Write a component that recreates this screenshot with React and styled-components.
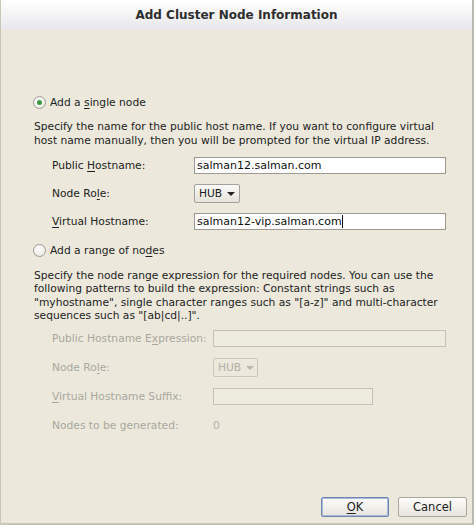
import React from "react";
import styled, { createGlobalStyle } from "styled-components";

const GlobalStyle = createGlobalStyle`
  html, body {
    margin: 0;
    padding: 0;
    background: #ece9dc;
  }
  * {
    box-sizing: border-box;
  }
`;

const Dialog = styled.div`
  width: 474px;
  height: 525px;
  display: flex;
  flex-direction: column;
  font-family: "DejaVu Sans", Verdana, sans-serif;
  font-size: 10.7px;
  color: #1e1e1e;
  background: #ece9dc;
  border-left: 1px solid #c9c6b8;
  border-right: 2px solid #b9b7ae;
  border-bottom: 2px solid #c9c6b8;
`;

const TitleBar = styled.div`
  height: 30px;
  flex-shrink: 0;
  display: flex;
  align-items: center;
  justify-content: center;
  padding-bottom: 1px;
  background: linear-gradient(#ffffff, #f6f6f7 40%, #e7e7ec);
  font-weight: bold;
  font-size: 12px;
  color: #2e2e2e;
`;

const Body = styled.div`
  flex: 1;
  display: flex;
  flex-direction: column;
  padding: 65px 8px 0 32px;
`;

const RadioRow = styled.label`
  display: flex;
  align-items: center;
  gap: 4px;
  height: 14px;
  margin-top: ${(p) => p.$top || 0}px;
`;

const RadioDot = styled.span`
  width: 13px;
  height: 13px;
  border-radius: 50%;
  border: 1px solid #9d9c95;
  background: radial-gradient(circle at 40% 35%, #ffffff, #e6e4dc);
  display: flex;
  align-items: center;
  justify-content: center;

  &::after {
    content: "";
    width: 5px;
    height: 5px;
    border-radius: 50%;
    background: ${(p) => (p.$checked ? "#3c9a3c" : "transparent")};
  }
`;

const Key = styled.span`
  text-decoration: underline;
  text-underline-offset: 2px;
`;

const Note = styled.p`
  margin: ${(p) => p.$top || 0}px 0 0 1px;
  line-height: ${(p) => p.$lh || 14}px;
  white-space: nowrap;
  color: #222;
`;

const Form = styled.div`
  display: grid;
  grid-template-columns: ${(p) => p.$label}px 1fr;
  row-gap: ${(p) => p.$gap}px;
  align-items: center;
  margin: ${(p) => p.$top}px 18px 0 19px;
`;

const Label = styled.span`
  color: ${(p) => (p.$disabled ? "#a9a79e" : "#222")};
`;

const TextField = styled.div`
  height: 17px;
  width: ${(p) => (p.$w ? `${p.$w}px` : "100%")};
  border: 1px solid ${(p) => (p.$disabled ? "#c3c1b8" : "#9c9a93")};
  background: ${(p) => (p.$disabled ? "#eeebdf" : "#fff")};
  padding: 0 2px;
  display: flex;
  align-items: center;
  font-size: 11px;
  color: #111;
`;

const Caret = styled.span`
  width: 1px;
  height: 13px;
  background: #111;
`;

const Combo = styled.div`
  width: ${(p) => p.$w}px;
  height: 19px;
  border: 1px solid ${(p) => (p.$disabled ? "#c9c7be" : "#a3a199")};
  border-radius: 2px;
  background: ${(p) =>
    p.$disabled ? "#ece9dc" : "linear-gradient(#fbfbf9, #e4e2d9)"};
  display: flex;
  align-items: center;
  gap: 5px;
  padding: 0 4px;
  color: ${(p) => (p.$disabled ? "#b0aea5" : "#1a1a1a")};
`;

const Arrow = styled.span`
  width: 0;
  height: 0;
  border-left: 4px solid transparent;
  border-right: 4px solid transparent;
  border-top: 4px solid ${(p) => (p.$disabled ? "#b9b7ae" : "#222")};
`;

const Value = styled.span`
  height: 19px;
  display: flex;
  align-items: center;
  color: #b3b1a8;
`;

const Footer = styled.div`
  display: flex;
  justify-content: flex-end;
  gap: 9px;
  padding: 0 5px 6px 0;
`;

const Button = styled.button`
  width: ${(p) => p.$w}px;
  height: 20px;
  font-family: inherit;
  font-size: 11.5px;
  color: #222;
  border-radius: 2px;
  border: 1px solid ${(p) => (p.$default ? "#6f86b0" : "#a8a69e")};
  box-shadow: ${(p) => (p.$default ? "inset 0 0 0 1px #a9bad8" : "none")};
  background: linear-gradient(#fdfdfc, #e6e4dc);
  padding: 0;
`;

export default function App() {
  return (
    <>
      <GlobalStyle />
      <Dialog>
        <TitleBar>Add Cluster Node Information</TitleBar>
        <Body>
          <RadioRow>
            <RadioDot $checked />
            <span>
              Add a <Key>s</Key>ingle node
            </span>
          </RadioRow>
          <Note $top={11}>
            Specify the name for the public host name. If you want to configure virtual
            <br />
            host name manually, then you will be prompted for the virtual IP address.
          </Note>
          <Form $label={142} $gap={10} $top={9}>
            <Label>
              Public <Key>H</Key>ostname:
            </Label>
            <TextField>salman12.salman.com</TextField>
            <Label>
              Node Ro<Key>l</Key>e:
            </Label>
            <Combo $w={46}>
              HUB <Arrow />
            </Combo>
            <Label>
              <Key>V</Key>irtual Hostname:
            </Label>
            <TextField>
              salman12-vip.salman.com
              <Caret />
            </TextField>
          </Form>
          <RadioRow $top={13}>
            <RadioDot />
            <span>
              Add a range of no<Key>d</Key>es
            </span>
          </RadioRow>
          <Note $top={12} $lh={13.3}>
            Specify the node range expression for the required nodes. You can use the
            <br />
            following patterns to build the expression: Constant strings such as
            <br />
            "myhostname", single character ranges such as "[a-z]" and multi-character
            <br />
            sequences such as "[ab|cd|..]".
          </Note>
          <Form $label={161} $gap={11} $top={8}>
            <Label $disabled>
              Public Hostname E<Key>x</Key>pression:
            </Label>
            <TextField $disabled />
            <Label $disabled>
              Node Ro<Key>l</Key>e:
            </Label>
            <Combo $w={45} $disabled>
              HUB <Arrow $disabled />
            </Combo>
            <Label $disabled>
              <Key>V</Key>irtual Hostname Suffix:
            </Label>
            <TextField $disabled $w={160} />
            <Label $disabled>Nodes to be generated:</Label>
            <Value>0</Value>
          </Form>
        </Body>
        <Footer>
          <Button $w={68} $default>
            <Key>O</Key>K
          </Button>
          <Button $w={69}>Cancel</Button>
        </Footer>
      </Dialog>
    </>
  );
}
